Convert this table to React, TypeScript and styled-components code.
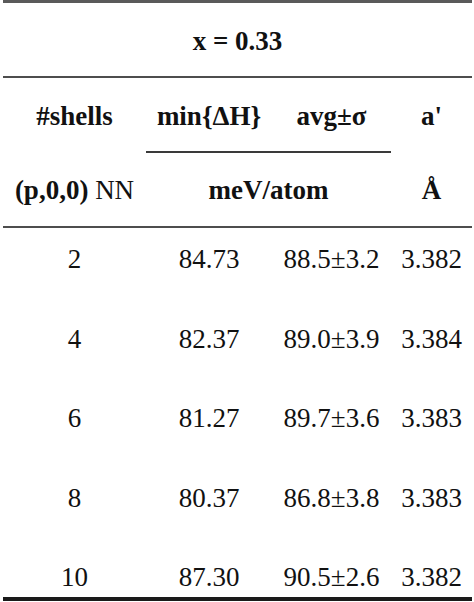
import React, { FC } from "react";
import styled, { createGlobalStyle } from "styled-components";

const GlobalStyle = createGlobalStyle`
  html, body {
    margin: 0;
    padding: 0;
    background: #ffffff;
  }
`;

interface Row {
  shells: string;
  min: string;
  avg: string;
  a: string;
}

const rows: Row[] = [
  { shells: "2", min: "84.73", avg: "88.5±3.2", a: "3.382" },
  { shells: "4", min: "82.37", avg: "89.0±3.9", a: "3.384" },
  { shells: "6", min: "81.27", avg: "89.7±3.6", a: "3.383" },
  { shells: "8", min: "80.37", avg: "86.8±3.8", a: "3.383" },
  { shells: "10", min: "87.30", avg: "90.5±2.6", a: "3.382" },
];

const COLS = "143px 126px 119px 81px";

const App: FC = () => {
  return (
    <>
      <GlobalStyle />
      <Sheet>
        <Title>x = 0.33</Title>
        <HeadRow $cols={COLS}>
          <HeadCell>#shells</HeadCell>
          <HeadCell $underline>min{"{"}ΔH{"}"}</HeadCell>
          <HeadCell $underline>avg±σ</HeadCell>
          <HeadCell>a'</HeadCell>
        </HeadRow>
        <UnitRow $cols="143px 245px 81px">
          <HeadCell>
            (p,0,0) <Plain>NN</Plain>
          </HeadCell>
          <HeadCell>meV/atom</HeadCell>
          <HeadCell>Å</HeadCell>
        </UnitRow>
        <Body>
          {rows.map((r) => (
            <DataRow key={r.shells} $cols={COLS}>
              <Cell>{r.shells}</Cell>
              <Cell>{r.min}</Cell>
              <Cell>{r.avg}</Cell>
              <Cell>{r.a}</Cell>
            </DataRow>
          ))}
        </Body>
      </Sheet>
    </>
  );
};

const Sheet = styled.div`
  width: 469px;
  margin-left: 3px;
  font-family: "Liberation Serif", serif;
  font-size: 27px;
  line-height: 30px;
  color: #111;
`;

const Title = styled.div`
  font-weight: 700;
  text-align: center;
  border-top: 3px solid #5a5a5a;
  border-bottom: 2px solid #4d4d4d;
  padding: 23px 0 20px;
`;

const Grid = styled.div<{ $cols: string }>`
  display: grid;
  grid-template-columns: ${(p) => p.$cols};
`;

const HeadRow = styled(Grid)`
  padding-top: 23px;
`;

const UnitRow = styled(Grid)`
  padding: 22px 0 21px;
  border-bottom: 2px solid #4d4d4d;
`;

const HeadCell = styled.div<{ $underline?: boolean }>`
  font-weight: 700;
  text-align: center;
  white-space: nowrap;
  padding-bottom: 20px;
  border-bottom: 2px solid ${(p) => (p.$underline ? "#3a3a3a" : "transparent")};

  ${UnitRow} & {
    padding-bottom: 0;
    border-bottom: none;
  }
`;

const Plain = styled.span`
  font-weight: 400;
`;

const Body = styled.div`
  border-bottom: 4px solid #1a1a1a;
`;

const DataRow = styled(Grid)`
  padding: 16px 0 33.5px;

  &:last-child {
    padding-bottom: 5px;
  }
`;

const Cell = styled.div`
  text-align: center;
  white-space: nowrap;
`;

export default App;
